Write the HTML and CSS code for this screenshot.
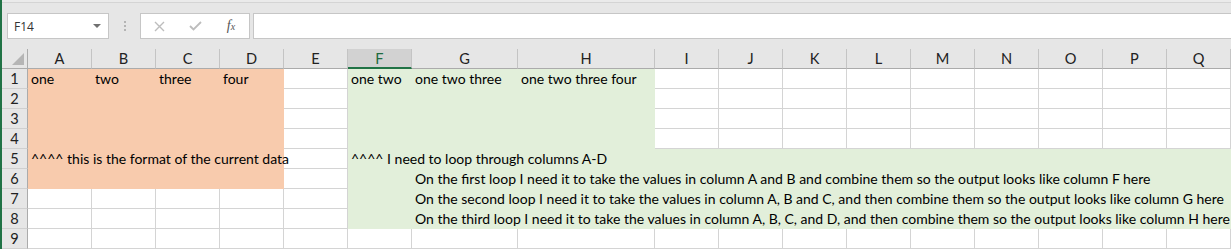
FILE: index.html
```html
<!DOCTYPE html>
<html>
<head>
<meta charset="utf-8">
<link rel="stylesheet" href="styles.css">
</head>
<body>
<div class="app">
  <div class="toolbar">
    <div class="namebox"><span class="ref">F14</span><span class="caret"></span></div>
    <div class="grip"><i></i><i></i><i></i></div>
    <div class="btnbox">
      <span class="btn"><svg width="11" height="11" viewBox="0 0 11 11"><path d="M1 1 L10 10 M10 1 L1 10" stroke="#BDBDBD" stroke-width="1.4" fill="none"/></svg></span>
      <span class="btn"><svg width="13" height="10" viewBox="0 0 13 10"><path d="M1 5 L4.5 8.5 L12 1" stroke="#BDBDBD" stroke-width="1.8" fill="none"/></svg></span>
      <span class="btn fx"><i>f</i><sub>x</sub></span>
    </div>
    <div class="formula"></div>
  </div>

  <div class="sheet">
    <div class="row">
      <div class="corner"><span class="tri"></span></div>
      <div class="ch">A</div><div class="ch">B</div><div class="ch">C</div><div class="ch">D</div><div class="ch">E</div>
      <div class="ch sel">F</div><div class="ch">G</div><div class="ch">H</div><div class="ch">I</div><div class="ch">J</div>
      <div class="ch">K</div><div class="ch">L</div><div class="ch">M</div><div class="ch">N</div><div class="ch">O</div>
      <div class="ch">P</div><div class="ch">Q</div>
    </div>

    <div class="row">
      <div class="rh">1</div>
      <div class="c p t">one</div><div class="c p t">two</div><div class="c p t">three</div><div class="c p t">four</div>
      <div class="c"></div>
      <div class="c g t">one two</div><div class="c g t">one two three</div><div class="c g t">one two three four</div>
      <div class="c"></div><div class="c"></div><div class="c"></div><div class="c"></div><div class="c"></div>
      <div class="c"></div><div class="c"></div><div class="c"></div><div class="c"></div>
    </div>

    <div class="row">
      <div class="rh">2</div>
      <div class="c p"></div><div class="c p"></div><div class="c p"></div><div class="c p"></div>
      <div class="c"></div>
      <div class="c g"></div><div class="c g"></div><div class="c g"></div>
      <div class="c"></div><div class="c"></div><div class="c"></div><div class="c"></div><div class="c"></div>
      <div class="c"></div><div class="c"></div><div class="c"></div><div class="c"></div>
    </div>

    <div class="row">
      <div class="rh">3</div>
      <div class="c p"></div><div class="c p"></div><div class="c p"></div><div class="c p"></div>
      <div class="c"></div>
      <div class="c g"></div><div class="c g"></div><div class="c g"></div>
      <div class="c"></div><div class="c"></div><div class="c"></div><div class="c"></div><div class="c"></div>
      <div class="c"></div><div class="c"></div><div class="c"></div><div class="c"></div>
    </div>

    <div class="row">
      <div class="rh">4</div>
      <div class="c p"></div><div class="c p"></div><div class="c p"></div><div class="c p"></div>
      <div class="c"></div>
      <div class="c g"></div><div class="c g"></div><div class="c g"></div>
      <div class="c"></div><div class="c"></div><div class="c"></div><div class="c"></div><div class="c"></div>
      <div class="c"></div><div class="c"></div><div class="c"></div><div class="c"></div>
    </div>

    <div class="row">
      <div class="rh">5</div>
      <div class="c p t">^^^^ this is the format of the current data</div><div class="c p"></div><div class="c p"></div><div class="c p"></div>
      <div class="c"></div>
      <div class="c g t">^^^^ I need to loop through columns A-D</div><div class="c g"></div><div class="c g"></div>
      <div class="c g"></div><div class="c g"></div><div class="c g"></div><div class="c g"></div><div class="c g"></div>
      <div class="c g"></div><div class="c g"></div><div class="c g"></div><div class="c g"></div>
    </div>

    <div class="row">
      <div class="rh">6</div>
      <div class="c p"></div><div class="c p"></div><div class="c p"></div><div class="c p"></div>
      <div class="c"></div>
      <div class="c g"></div><div class="c g t">On the first loop I need it to take the values in column A and B and combine them so the output looks like column F here</div><div class="c g"></div>
      <div class="c g"></div><div class="c g"></div><div class="c g"></div><div class="c g"></div><div class="c g"></div>
      <div class="c g"></div><div class="c g"></div><div class="c g"></div><div class="c g"></div>
    </div>

    <div class="row">
      <div class="rh">7</div>
      <div class="c"></div><div class="c"></div><div class="c"></div><div class="c"></div>
      <div class="c"></div>
      <div class="c g"></div><div class="c g t">On the second loop I need it to take the values in column A, B and C, and then combine them so the output looks like column G here</div><div class="c g"></div>
      <div class="c g"></div><div class="c g"></div><div class="c g"></div><div class="c g"></div><div class="c g"></div>
      <div class="c g"></div><div class="c g"></div><div class="c g"></div><div class="c g"></div>
    </div>

    <div class="row">
      <div class="rh">8</div>
      <div class="c"></div><div class="c"></div><div class="c"></div><div class="c"></div>
      <div class="c"></div>
      <div class="c g"></div><div class="c g t">On the third loop I need it to take the values in column A, B, C, and D, and then combine them so the output looks like column H here</div><div class="c g"></div>
      <div class="c g"></div><div class="c g"></div><div class="c g"></div><div class="c g"></div><div class="c g"></div>
      <div class="c g"></div><div class="c g"></div><div class="c g"></div><div class="c g"></div>
    </div>

    <div class="row">
      <div class="rh">9</div>
      <div class="c"></div><div class="c"></div><div class="c"></div><div class="c"></div>
      <div class="c"></div>
      <div class="c"></div><div class="c"></div><div class="c"></div>
      <div class="c"></div><div class="c"></div><div class="c"></div><div class="c"></div><div class="c"></div>
      <div class="c"></div><div class="c"></div><div class="c"></div><div class="c"></div>
    </div>
  </div>
</div>
</body>
</html>
```

FILE: styles.css
```css
html, body {
  margin: 0;
  padding: 0;
  background: #ffffff;
  overflow: hidden;
}

.app {
  width: 1231px;
  height: 249px;
  box-sizing: border-box;
  border-left: 2px solid #217346;
  display: flex;
  flex-direction: column;
  font-family: "Lato", "Liberation Sans", sans-serif;
  color: #000;
}

/* ---------- formula bar ---------- */
.toolbar {
  height: 49px;
  box-sizing: border-box;
  background: #E6E6E6;
  border-top: 2px solid #EAEAEA;
  box-shadow: inset 0 1px 0 #D4D4D4;
  padding-top: 11px;
  display: flex;
  align-items: flex-start;
}

.namebox {
  margin-left: 5px;
  width: 102px;
  height: 26px;
  box-sizing: border-box;
  background: #fff;
  border: 1px solid #C6C6C6;
  display: flex;
  align-items: center;
  justify-content: space-between;
  padding: 0 7px 0 6px;
}

.ref {
  font-family: "Open Sans", "Noto Sans", sans-serif;
  font-size: 12px;
  color: #333;
}

.caret {
  width: 0;
  height: 0;
  border-left: 4px solid transparent;
  border-right: 4px solid transparent;
  border-top: 4px solid #707070;
}

.grip {
  margin-left: 15px;
  height: 26px;
  width: 2px;
  display: flex;
  flex-direction: column;
  justify-content: center;
  gap: 2px;
}
.grip i {
  display: block;
  width: 2px;
  height: 2px;
  background: #B4B4B4;
}

.btnbox {
  margin-left: 14px;
  width: 110px;
  height: 26px;
  box-sizing: border-box;
  background: #fff;
  border: 1px solid #C6C6C6;
  display: flex;
}

.btn {
  width: 36px;
  height: 24px;
  display: flex;
  align-items: center;
  justify-content: center;
}

.fx {
  font-family: "Liberation Serif", serif;
  font-size: 14px;
  color: #555;
}
.fx i {
  font-style: italic;
}
.fx sub {
  font-style: italic;
  font-size: 10px;
  vertical-align: -1px;
}

.formula {
  margin-left: 3px;
  flex: 1;
  height: 26px;
  box-sizing: border-box;
  background: #fff;
  border: 1px solid #C6C6C6;
  border-right: none;
}

/* ---------- sheet ---------- */
.sheet {
  display: grid;
  grid-template-columns: 26px repeat(6, 64px) 106px 137px repeat(9, 64px);
  grid-auto-rows: 20px;
  font-size: 14px;
}

.row {
  display: contents;
}

.corner {
  background: #E6E6E6;
  border-right: 1px solid #ABABAB;
  border-bottom: 1px solid #ABABAB;
  position: relative;
}
.tri {
  position: absolute;
  right: 3px;
  bottom: 3px;
  width: 0;
  height: 0;
  border-left: 12px solid transparent;
  border-bottom: 12px solid #B5B5B5;
}

.ch {
  background: #E6E6E6;
  border-right: 1px solid #C4C4C4;
  border-bottom: 1px solid #ABABAB;
  display: flex;
  align-items: center;
  justify-content: center;
  color: #222;
  line-height: 19px;
  font-size: 14.6px;
}
.ch.sel {
  background: #D2D2D2;
  color: #1E6B40;
  border-bottom: 2px solid #217346;
}

.rh {
  background: #E6E6E6;
  border-right: 1px solid #ABABAB;
  border-bottom: 1px solid #D0D0D0;
  display: flex;
  align-items: center;
  justify-content: center;
  color: #222;
  line-height: 19px;
  font-size: 14.6px;
}

.c {
  border-right: 1px solid #D4D4D4;
  border-bottom: 1px solid #D4D4D4;
  background: #fff;
  white-space: nowrap;
  line-height: 20px;
}
.c.p {
  background: #F8CBAD;
  border-color: #F8CBAD;
}
.c.g {
  background: #E2EFDA;
  border-color: #E2EFDA;
}
.c.t {
  padding-left: 3px;
  overflow: visible;
  z-index: 1;
}
```
